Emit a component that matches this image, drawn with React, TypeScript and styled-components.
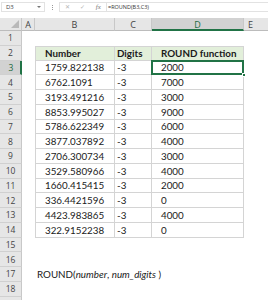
import React from "react";
import styled, { createGlobalStyle } from "styled-components";

const Global = createGlobalStyle`
  html, body { margin: 0; padding: 0; background: #ffffff; }
  body { width: 268px; height: 300px; overflow: hidden; }
`;

const ROW_H = 14.75;
const COLS = "22px 13px 80px 37px 92px 1fr";
const GRID = "#d4d4d4";
const GREEN = "#217346";

const Page = styled.div`
  width: 268px;
  height: 300px;
  overflow: hidden;
  background: #fff;
  font-family: "Lato", "Liberation Sans", sans-serif;
`;

const FormulaBar = styled.div`
  height: 18px;
  display: flex;
  align-items: flex-start;
  padding-top: 2px;
  box-sizing: border-box;
  background: #fff;
  font-family: "Open Sans", "Liberation Sans", sans-serif;
  font-size: 6px;
  color: #444;
`;

const NameBox = styled.div`
  width: 44px;
  height: 10px;
  margin-left: 1px;
  box-sizing: border-box;
  border: 1px solid #e2e2e2;
  display: flex;
  align-items: center;
  justify-content: space-between;
  padding: 0 3px 0 4px;
`;

const Caret = styled.span`
  width: 0;
  height: 0;
  border-left: 2px solid transparent;
  border-right: 2px solid transparent;
  border-top: 2px solid #777;
`;

const Dots = styled.div`
  width: 14px;
  height: 10px;
  display: flex;
  flex-direction: column;
  align-items: center;
  justify-content: center;
  gap: 1px;
  & > span { width: 1px; height: 1px; background: #999; }
`;

const IconBox = styled.div`
  width: 47px;
  height: 10px;
  box-sizing: border-box;
  border: 1px solid #e2e2e2;
  border-right: none;
  display: flex;
  align-items: center;
  justify-content: space-around;
  color: #b5b5b5;
  font-size: 6px;
`;

const Fx = styled.span`
  font-style: italic;
  font-family: "Liberation Serif", serif;
  color: #777;
  font-size: 7px;
`;

const FormulaInput = styled.div`
  flex: 1;
  height: 10px;
  box-sizing: border-box;
  border: 1px solid #e2e2e2;
  border-right: none;
  display: flex;
  align-items: center;
  padding-left: 1px;
  color: #333;
  font-size: 5.5px;
`;

const Sheet = styled.div`
  display: grid;
  grid-template-columns: ${COLS};
  grid-template-rows: 13px repeat(19, ${ROW_H}px);
`;

const Corner = styled.div`
  background: #e6e6e6;
  border-right: 1px solid #c8c8c8;
  border-bottom: 1px solid #bcbcbc;
  position: relative;
  box-sizing: border-box;
  &::after {
    content: "";
    position: absolute;
    right: 2px;
    bottom: 2px;
    width: 0;
    height: 0;
    border-left: 8px solid transparent;
    border-bottom: 8px solid #b9b9b9;
  }
`;

const ColHead = styled.div<{ $active?: boolean; $last?: boolean }>`
  box-sizing: border-box;
  background: ${(p) => (p.$active ? "#d2d2d2" : "#e6e6e6")};
  border-right: ${(p) => (p.$last ? "none" : "1px solid #c8c8c8")};
  border-bottom: ${(p) => (p.$active ? `2px solid ${GREEN}` : "1px solid #bcbcbc")};
  color: ${(p) => (p.$active ? "#1e6b40" : "#444")};
  font-family: "Open Sans", "Liberation Sans", sans-serif;
  font-size: 9px;
  display: flex;
  align-items: center;
  justify-content: ${(p) => (p.$last ? "flex-start" : "center")};
  padding-top: ${(p) => (p.$active ? "1px" : "0")};
  padding-left: ${(p) => (p.$last ? "4px" : "0")};
`;

const RowHead = styled.div<{ $active?: boolean }>`
  box-sizing: border-box;
  background: ${(p) => (p.$active ? "#d2d2d2" : "#e6e6e6")};
  border-right: ${(p) => (p.$active ? `2px solid ${GREEN}` : "1px solid #c8c8c8")};
  border-bottom: 1px solid #d0d0d0;
  color: ${(p) => (p.$active ? "#1e6b40" : "#444")};
  font-family: "Open Sans", "Liberation Sans", sans-serif;
  font-size: 8.5px;
  display: flex;
  align-items: center;
  justify-content: center;
  padding-left: ${(p) => (p.$active ? "2px" : "0")};
`;

const Cell = styled.div<{
  $table?: boolean;
  $head?: boolean;
  $indent?: number;
  $selected?: boolean;
  $left?: boolean;
}>`
  box-sizing: border-box;
  position: relative;
  font-size: 9.8px;
  color: #1a1a1a;
  white-space: nowrap;
  display: flex;
  align-items: center;
  padding-left: ${(p) => p.$indent ?? 2}px;
  font-weight: ${(p) => (p.$head ? 700 : 400)};
  background: ${(p) => (p.$head ? "#e2efda" : p.$table ? "#fff" : "transparent")};
  ${(p) =>
    p.$table
      ? `border-right: 1px solid ${GRID}; border-bottom: 1px solid ${GRID};`
      : ""}
  ${(p) => (p.$table && p.$left ? `border-left: 1px solid ${GRID};` : "")}
  ${(p) =>
    p.$selected
      ? `&::after { content: ""; position: absolute; left: -1px; top: -1px; right: -1px; bottom: -1px; border: 2px solid ${GREEN}; }
         &::before { content: ""; position: absolute; right: -3px; bottom: -3px; width: 4px; height: 4px; background: ${GREEN}; border: 1px solid #fff; z-index: 2; box-sizing: border-box; }`
      : ""}
`;

const TopCell = styled(Cell)`
  border-top: 1px solid ${GRID};
`;

const Formula = styled.span`
  & > i { font-style: italic; }
`;

const rows: [string, string][] = [
  ["1759.822138", "2000"],
  ["6762.1091", "7000"],
  ["3193.491216", "3000"],
  ["8853.995027", "9000"],
  ["5786.622349", "6000"],
  ["3877.037892", "4000"],
  ["2706.300734", "3000"],
  ["3529.580966", "4000"],
  ["1660.415415", "2000"],
  ["336.4421596", "0"],
  ["4423.983865", "4000"],
  ["322.9152238", "0"],
];

const Blank = () => (
  <>
    <Cell />
    <Cell />
    <Cell />
    <Cell />
    <Cell />
  </>
);

export default function App() {
  return (
    <Page>
      <Global />
      <FormulaBar>
        <NameBox>
          <span>D3</span>
          <Caret />
        </NameBox>
        <Dots>
          <span />
          <span />
          <span />
        </Dots>
        <IconBox>
          <span>✕</span>
          <span>✓</span>
          <Fx>fx</Fx>
        </IconBox>
        <FormulaInput>=ROUND(B3,C3)</FormulaInput>
      </FormulaBar>
      <Sheet>
        <Corner />
        <ColHead>A</ColHead>
        <ColHead>B</ColHead>
        <ColHead>C</ColHead>
        <ColHead $active>D</ColHead>
        <ColHead $last>E</ColHead>

        <RowHead>1</RowHead>
        <Blank />

        <RowHead>2</RowHead>
        <Cell />
        <TopCell $table $left $head $indent={9}>Number</TopCell>
        <TopCell $table $head>Digits</TopCell>
        <TopCell $table $head $indent={9}>ROUND function</TopCell>
        <Cell />

        {rows.map(([n, r], i) => (
          <React.Fragment key={i}>
            <RowHead $active={i === 0}>{i + 3}</RowHead>
            <Cell />
            <Cell $table $left $indent={9}>{n}</Cell>
            <Cell $table>-3</Cell>
            <Cell $table $indent={9} $selected={i === 0}>{r}</Cell>
            <Cell />
          </React.Fragment>
        ))}

        <RowHead>15</RowHead>
        <Blank />
        <RowHead>16</RowHead>
        <Blank />
        <RowHead>17</RowHead>
        <Cell />
        <Cell>
          <Formula>
            ROUND(<i>number</i>, <i>num_digits</i> )
          </Formula>
        </Cell>
        <Cell />
        <Cell />
        <Cell />
        <RowHead>18</RowHead>
        <Blank />
        <RowHead />
        <Blank />
      </Sheet>
    </Page>
  );
}
